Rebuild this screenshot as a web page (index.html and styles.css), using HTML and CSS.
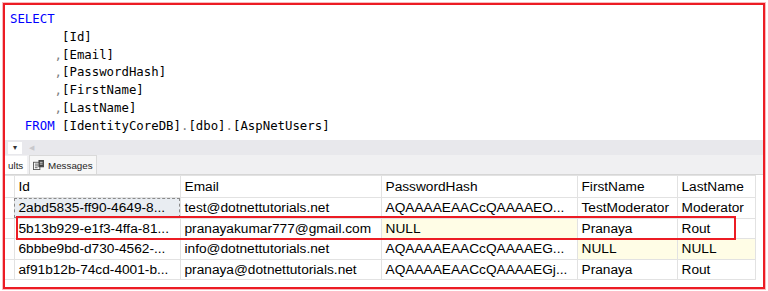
FILE: index.html
```html
<!DOCTYPE html>
<html lang="en">
<head>
  <meta charset="UTF-8">
  <title>SELECT AspNetUsers</title>
  <link rel="stylesheet" href="styles.css">
</head>
<body>
  <div class="frame">
    <div class="editor">
      <div class="line"><span class="kw">SELECT</span></div>
      <div class="line indent-7">[Id]</div>
      <div class="line indent-6"><span class="op">,</span>[Email]</div>
      <div class="line indent-6"><span class="op">,</span>[PasswordHash]</div>
      <div class="line indent-6"><span class="op">,</span>[FirstName]</div>
      <div class="line indent-6"><span class="op">,</span>[LastName]</div>
      <div class="line indent-2"><span class="kw">FROM</span> [IdentityCoreDB]<span class="op">.</span>[dbo]<span class="op">.</span>[AspNetUsers]</div>
    </div>

    <div class="hscroll">
      <span class="drop">&#9662;</span>
      <span class="arrow">&#9664;</span>
    </div>

    <div class="tabs">
      <span class="tab tab-results">ults</span>
      <span class="tab tab-messages">
        <svg class="msg-icon" width="11" height="10" viewBox="0 0 12 11">
          <rect x="0.5" y="2.5" width="7" height="8" fill="#fff" stroke="#555"/>
          <rect x="2" y="4" width="4" height="1" fill="#555"/>
          <rect x="2" y="6" width="4" height="1" fill="#555"/>
          <rect x="2" y="8" width="3" height="1" fill="#555"/>
          <rect x="6.5" y="0.5" width="5" height="7" fill="#444" stroke="#444"/>
          <rect x="7.5" y="2" width="3" height="1" fill="#ddd"/>
          <rect x="7.5" y="4" width="3" height="1" fill="#ddd"/>
        </svg>
        <span>Messages</span>
      </span>
    </div>

    <div class="results">
      <table class="grid">
        <colgroup>
          <col class="c-row">
          <col class="c-id">
          <col class="c-email">
          <col class="c-hash">
          <col class="c-first">
          <col class="c-last">
        </colgroup>
        <thead>
          <tr>
            <th></th><th>Id</th><th>Email</th><th>PasswordHash</th><th>FirstName</th><th>LastName</th>
          </tr>
        </thead>
        <tbody>
          <tr>
            <td></td>
            <td class="focus">2abd5835-ff90-4649-8...</td>
            <td>test@dotnettutorials.net</td>
            <td>AQAAAAEAACcQAAAAEO...</td>
            <td>TestModerator</td>
            <td>Moderator</td>
          </tr>
          <tr>
            <td></td>
            <td>5b13b929-e1f3-4ffa-81...</td>
            <td>pranayakumar777@gmail.com</td>
            <td class="null">NULL</td>
            <td>Pranaya</td>
            <td>Rout</td>
          </tr>
          <tr>
            <td></td>
            <td>6bbbe9bd-d730-4562-...</td>
            <td>info@dotnettutorials.net</td>
            <td>AQAAAAEAACcQAAAAEG...</td>
            <td class="null">NULL</td>
            <td class="null">NULL</td>
          </tr>
          <tr>
            <td></td>
            <td>af91b12b-74cd-4001-b...</td>
            <td>pranaya@dotnettutorials.net</td>
            <td>AQAAAAEAACcQAAAAEGj...</td>
            <td>Pranaya</td>
            <td>Rout</td>
          </tr>
        </tbody>
      </table>
      <div class="highlight"></div>
    </div>
  </div>
</body>
</html>
```

FILE: styles.css
```css
body {
  margin: 0;
  background: #ffffff;
}

.frame {
  box-sizing: border-box;
  width: 762px;
  height: 286px;
  margin: 3px;
  border: 2px solid #ec1c24;
  box-shadow: 0 0 0 1px rgba(236, 28, 36, 0.3);
  background: #ffffff;
  overflow: hidden;
}

.editor {
  box-sizing: border-box;
  height: 135px;
  padding: 6px 0 0 5px;
  font-family: "DejaVu Sans Mono", monospace;
  font-size: 12.35px;
  line-height: 17.8px;
  color: #000000;
}

.line {
  white-space: pre;
}

.indent-2 { padding-left: 2ch; }
.indent-6 { padding-left: 6ch; }
.indent-7 { padding-left: 7ch; }

.kw {
  color: #0000ff;
}

.op {
  color: #808080;
}

.hscroll {
  display: flex;
  align-items: center;
  height: 15px;
  padding-left: 3px;
  background: #e8e8ec;
}

.drop {
  display: flex;
  align-items: center;
  justify-content: center;
  width: 14px;
  height: 12px;
  background: #ffffff;
  font-size: 8px;
  color: #333;
}

.arrow {
  margin-left: 7px;
  font-size: 7px;
  color: #c8c8cc;
}

.tabs {
  display: flex;
  align-items: flex-end;
  height: 20px;
  background: #f0f0f2;
  border-bottom: 1px solid #d6d6d6;
  box-sizing: border-box;
  font-family: "Liberation Sans", Arial, sans-serif;
  font-size: 9.8px;
  color: #1e1e1e;
}

.tab {
  display: flex;
  align-items: center;
  height: 18px;
}

.tab-results {
  padding-left: 3px;
  width: 19px;
  background: #ffffff;
}

.tab-messages {
  gap: 4px;
  margin-left: 2px;
  padding: 0 3px 0 3px;
  background: #f7f7f7;
  border: 1px solid #dadada;
  border-bottom: none;
}

.results {
  position: relative;
}

.grid {
  border-collapse: collapse;
  table-layout: fixed;
  font-family: "Liberation Sans", Arial, sans-serif;
  font-size: 13.7px;
  color: #000000;
}

.c-row { width: 9px; }
.c-id { width: 166px; }
.c-email { width: 201px; }
.c-hash { width: 196px; }
.c-first { width: 100px; }
.c-last { width: 78px; }

.grid th,
.grid td {
  height: 19.5px;
  padding: 0 0 0 4px;
  border: 1px solid #e2e2e2;
  text-align: left;
  font-weight: normal;
  white-space: nowrap;
  overflow: hidden;
}

.grid th {
  height: 21px;
}

.grid th:first-child,
.grid td:first-child {
  padding: 0;
  border-left: none;
}

.grid td.focus {
  background: #e9edf2;
  outline: 1px dashed #8a8a8a;
  outline-offset: -1px;
}

.grid td.null {
  background: #fffde6;
}

.highlight {
  position: absolute;
  left: 11px;
  top: 41px;
  width: 720px;
  height: 24px;
  box-sizing: border-box;
  border: 2px solid #ec1c24;
}
```
